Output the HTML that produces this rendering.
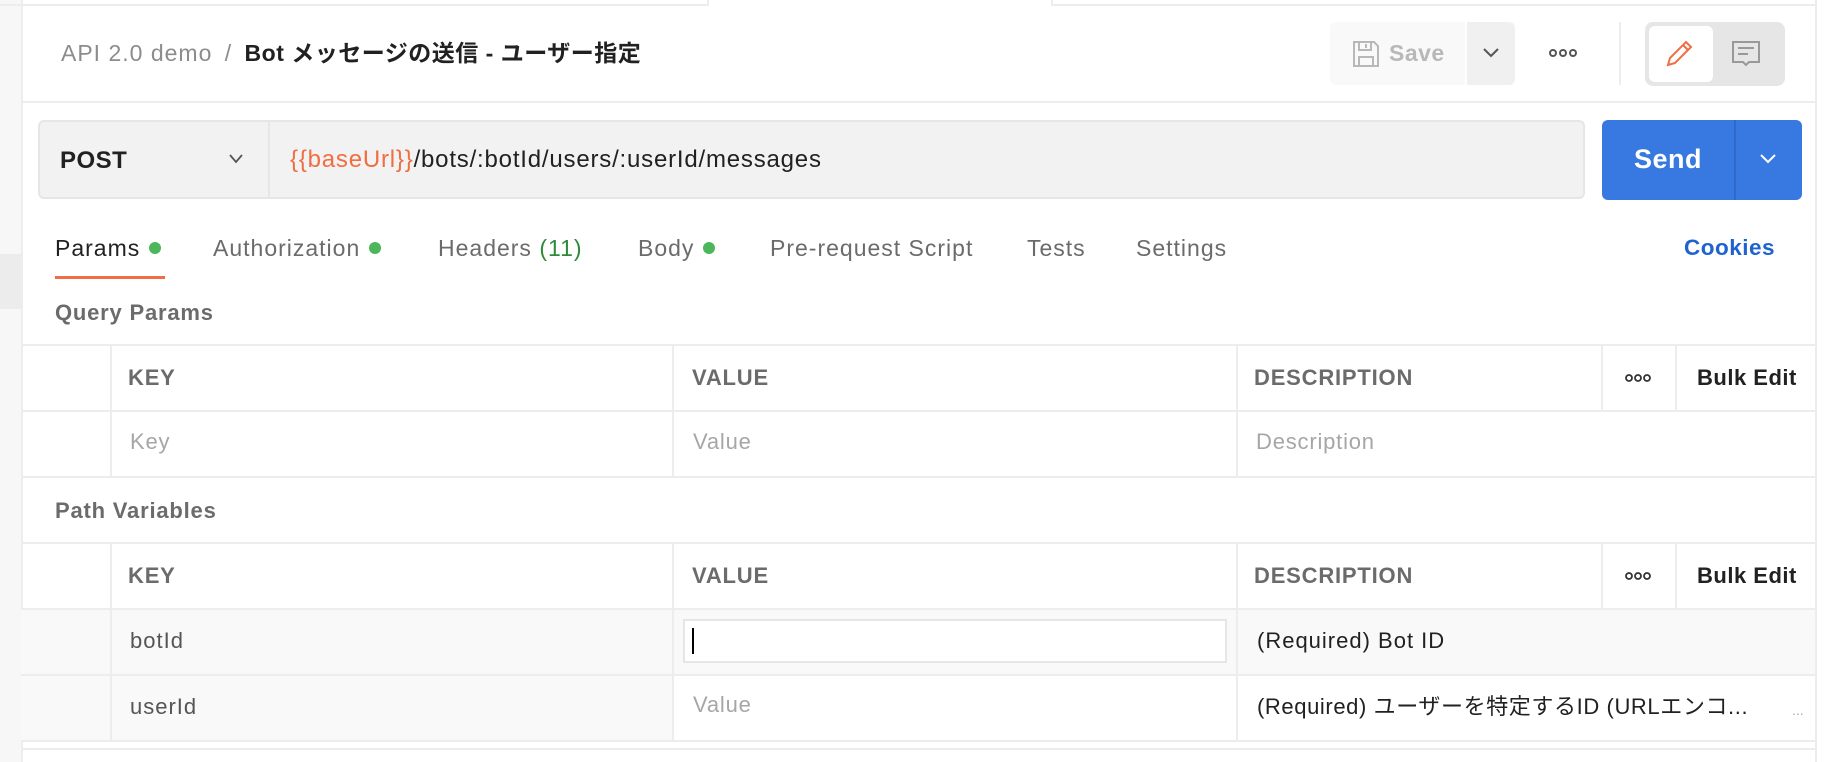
<!DOCTYPE html>
<html><head><meta charset="utf-8"><style>
*{box-sizing:border-box;margin:0;padding:0}
body{width:1826px;height:762px;overflow:hidden;background:#fff;font-family:"Liberation Sans","Noto Sans CJK JP",sans-serif;position:relative;color:#212121}
.a{position:absolute}
.t{position:absolute;white-space:nowrap;line-height:1}
.hl{position:absolute;height:2px;background:#ededed}
.vl{position:absolute;width:2px;background:#ededed}
.th{font-size:22px;letter-spacing:0.8px;font-weight:bold;color:#6b6b6b}
.ph{font-size:22px;letter-spacing:0.8px;color:#a6a6a6}
.tb{font-size:23px;letter-spacing:1px;color:#6b6b6b}
.rw{font-size:22px;letter-spacing:1px}
.dot{display:inline-block;width:12px;height:12px;border-radius:50%;background:#4bb75a;margin-left:9px;vertical-align:2px}
</style></head><body>
<div class="a" style="left:0;top:0;width:21px;height:762px;background:#f7f7f7"></div>
<div class="a" style="left:0;top:254px;width:21px;height:55px;background:#ececec"></div>
<div class="vl" style="left:21px;top:0;height:762px"></div>
<div class="hl" style="left:0;top:4px;width:708px"></div>
<div class="hl" style="left:1052px;top:4px;width:764px"></div>
<div class="vl" style="left:707px;top:0;height:6px"></div>
<div class="vl" style="left:1051px;top:0;height:6px"></div>
<div class="vl" style="left:1815px;top:0;height:762px"></div>
<div class="t" style="left:61px;top:42px;font-size:23px;letter-spacing:1px;color:#8c8c8c">API 2.0 demo <span style="margin:0 5px">/</span> <span style="color:#212121;font-weight:bold;letter-spacing:0.5px">Bot メッセージの送信 - ユーザー指定</span></div>
<div class="a" style="left:1330px;top:22px;width:135px;height:63px;background:#f9f9f9;border-radius:6px 0 0 6px"></div>
<svg class="a" style="left:1352px;top:40px" width="28" height="28" viewBox="0 0 28 28" fill="none" stroke="#b8b8b8" stroke-width="2"><path d="M2 2h20l4 4v20H2z"/><path d="M7 2v8h12V2M14 4v4M7 26v-9h14v9"/></svg>
<div class="t" style="left:1389px;top:42px;font-size:23px;letter-spacing:0.5px;font-weight:bold;color:#b8b8b8">Save</div>
<div class="a" style="left:1467px;top:22px;width:48px;height:63px;background:#f0f0f0;border-radius:0 6px 6px 0"></div>
<svg class="a" style="left:1482px;top:47px" width="18" height="12" viewBox="0 0 18 12" fill="none" stroke="#555" stroke-width="2"><path d="M2 2l7 7 7-7"/></svg>
<svg class="a" style="left:1548px;top:47px" width="30" height="12" viewBox="0 0 30 12" fill="none" stroke="#555" stroke-width="2"><circle cx="5" cy="6" r="3"/><circle cx="15" cy="6" r="3"/><circle cx="25" cy="6" r="3"/></svg>
<div class="vl" style="left:1619px;top:22px;height:63px"></div>
<div class="a" style="left:1645px;top:22px;width:140px;height:64px;background:#e6e6e6;border-radius:8px"></div>
<div class="a" style="left:1649px;top:26px;width:64px;height:56px;background:#fff;border-radius:6px"></div>
<svg class="a" style="left:1665px;top:38px" width="30" height="30" viewBox="0 0 30 30" fill="none" stroke="#f06e42" stroke-width="2"><path d="M3 27l2-7L21 4l5 5L10 25z"/><path d="M18 7l5 5"/></svg>
<svg class="a" style="left:1731px;top:40px" width="30" height="28" viewBox="0 0 30 28" fill="none" stroke="#999" stroke-width="2"><path d="M2 2h26v20H18l-3 3-3-3H2z"/><path d="M7 8h16M7 14h10"/></svg>
<div class="hl" style="left:21px;top:101px;width:1795px"></div>
<div class="a" style="left:38px;top:120px;width:1547px;height:79px;background:#f2f2f2;border:2px solid #e6e6e6;border-radius:6px"></div>
<div class="vl" style="left:268px;top:121px;height:77px;background:#e6e6e6"></div>
<div class="t" style="left:60px;top:149px;font-size:24px;letter-spacing:0.5px;font-weight:bold">POST</div>
<svg class="a" style="left:228px;top:153px" width="16" height="12" viewBox="0 0 16 12" fill="none" stroke="#555" stroke-width="1.8"><path d="M2 2l6 7 6-7"/></svg>
<div class="t" style="left:290px;top:148px;font-size:24px;letter-spacing:0.8px"><span style="color:#f06e42">{{baseUrl}}</span>/bots/:botId/users/:userId/messages</div>
<div class="a" style="left:1602px;top:120px;width:200px;height:80px;background:#3779e1;border-radius:6px"></div>
<div class="a" style="left:1734px;top:120px;width:2px;height:80px;background:#2f6acb"></div>
<div class="t" style="left:1634px;top:146px;font-size:27px;letter-spacing:0.5px;font-weight:bold;color:#fff">Send</div>
<svg class="a" style="left:1759px;top:153px" width="18" height="12" viewBox="0 0 18 12" fill="none" stroke="#fff" stroke-width="2"><path d="M2 2l7 7 7-7"/></svg>
<div class="t tb" style="left:55px;top:237px;color:#212121">Params<span class="dot"></span></div>
<div class="a" style="left:55px;top:276px;width:110px;height:3px;background:#f06e42"></div>
<div class="t tb" style="left:213px;top:237px">Authorization<span class="dot"></span></div>
<div class="t tb" style="left:438px;top:237px">Headers <span style="color:#2e8a3a">(11)</span></div>
<div class="t tb" style="left:638px;top:237px">Body<span class="dot"></span></div>
<div class="t tb" style="left:770px;top:237px">Pre-request Script</div>
<div class="t tb" style="left:1027px;top:237px">Tests</div>
<div class="t tb" style="left:1136px;top:237px">Settings</div>
<div class="t" style="left:1684px;top:237px;font-size:22.5px;letter-spacing:0.5px;font-weight:bold;color:#1f63d1">Cookies</div>
<div class="t" style="left:55px;top:302px;font-size:22px;letter-spacing:0.8px;font-weight:bold;color:#6b6b6b">Query Params</div>
<div class="hl" style="left:21px;top:344px;width:1795px"></div>
<div class="hl" style="left:21px;top:410px;width:1795px"></div>
<div class="hl" style="left:21px;top:476px;width:1795px"></div>
<div class="vl" style="left:110px;top:344px;height:133px"></div>
<div class="vl" style="left:672px;top:344px;height:133px"></div>
<div class="vl" style="left:1236px;top:344px;height:133px"></div>
<div class="vl" style="left:1601px;top:344px;height:66px"></div>
<div class="vl" style="left:1675px;top:344px;height:66px"></div>
<div class="t th" style="left:128px;top:367px">KEY</div>
<div class="t th" style="left:692px;top:367px">VALUE</div>
<div class="t th" style="left:1254px;top:367px">DESCRIPTION</div>
<svg class="a" style="left:1625px;top:373px" width="26" height="10" viewBox="0 0 26 10" fill="none" stroke="#333" stroke-width="1.8"><circle cx="4" cy="5" r="3"/><circle cx="13" cy="5" r="3"/><circle cx="22" cy="5" r="3"/></svg>
<div class="t" style="left:1697px;top:367px;font-size:22px;letter-spacing:0.5px;font-weight:bold">Bulk Edit</div>
<div class="t ph" style="left:130px;top:431px">Key</div>
<div class="t ph" style="left:693px;top:431px">Value</div>
<div class="t ph" style="left:1256px;top:431px">Description</div>
<div class="t" style="left:55px;top:500px;font-size:22px;letter-spacing:0.8px;font-weight:bold;color:#6b6b6b">Path Variables</div>
<div class="a" style="left:21px;top:609px;width:1794px;height:66px;background:#f9f9f9"></div>
<div class="a" style="left:21px;top:675px;width:90px;height:66px;background:#f9f9f9"></div>
<div class="a" style="left:112px;top:675px;width:560px;height:66px;background:#f9f9f9"></div>
<div class="hl" style="left:21px;top:542px;width:1795px"></div>
<div class="hl" style="left:21px;top:608px;width:1795px"></div>
<div class="hl" style="left:21px;top:674px;width:1795px"></div>
<div class="hl" style="left:21px;top:740px;width:1795px"></div>
<div class="hl" style="left:21px;top:748px;width:1795px"></div>
<div class="vl" style="left:110px;top:542px;height:199px"></div>
<div class="vl" style="left:672px;top:542px;height:199px"></div>
<div class="vl" style="left:1236px;top:542px;height:199px"></div>
<div class="vl" style="left:1601px;top:542px;height:66px"></div>
<div class="vl" style="left:1675px;top:542px;height:66px"></div>
<div class="t th" style="left:128px;top:565px">KEY</div>
<div class="t th" style="left:692px;top:565px">VALUE</div>
<div class="t th" style="left:1254px;top:565px">DESCRIPTION</div>
<svg class="a" style="left:1625px;top:571px" width="26" height="10" viewBox="0 0 26 10" fill="none" stroke="#333" stroke-width="1.8"><circle cx="4" cy="5" r="3"/><circle cx="13" cy="5" r="3"/><circle cx="22" cy="5" r="3"/></svg>
<div class="t" style="left:1697px;top:565px;font-size:22px;letter-spacing:0.5px;font-weight:bold">Bulk Edit</div>
<div class="t rw" style="left:130px;top:630px;color:#555">botId</div>
<div class="a" style="left:683px;top:619px;width:544px;height:44px;background:#fff;border:2px solid #e6e6e6"></div>
<div class="a" style="left:692px;top:628px;width:2px;height:26px;background:#000"></div>
<div class="t rw" style="left:1257px;top:630px">(Required) Bot ID</div>
<div class="t rw" style="left:130px;top:696px;color:#555">userId</div>
<div class="t ph" style="left:693px;top:694px">Value</div>
<div class="t" style="left:1257px;top:696px;font-size:22px;letter-spacing:0.6px">(Required) ユーザーを特定するID (URLエンコ...</div>
<div class="t" style="left:1792px;top:703px;font-size:14px;color:#aaa">...</div>
</body></html>
